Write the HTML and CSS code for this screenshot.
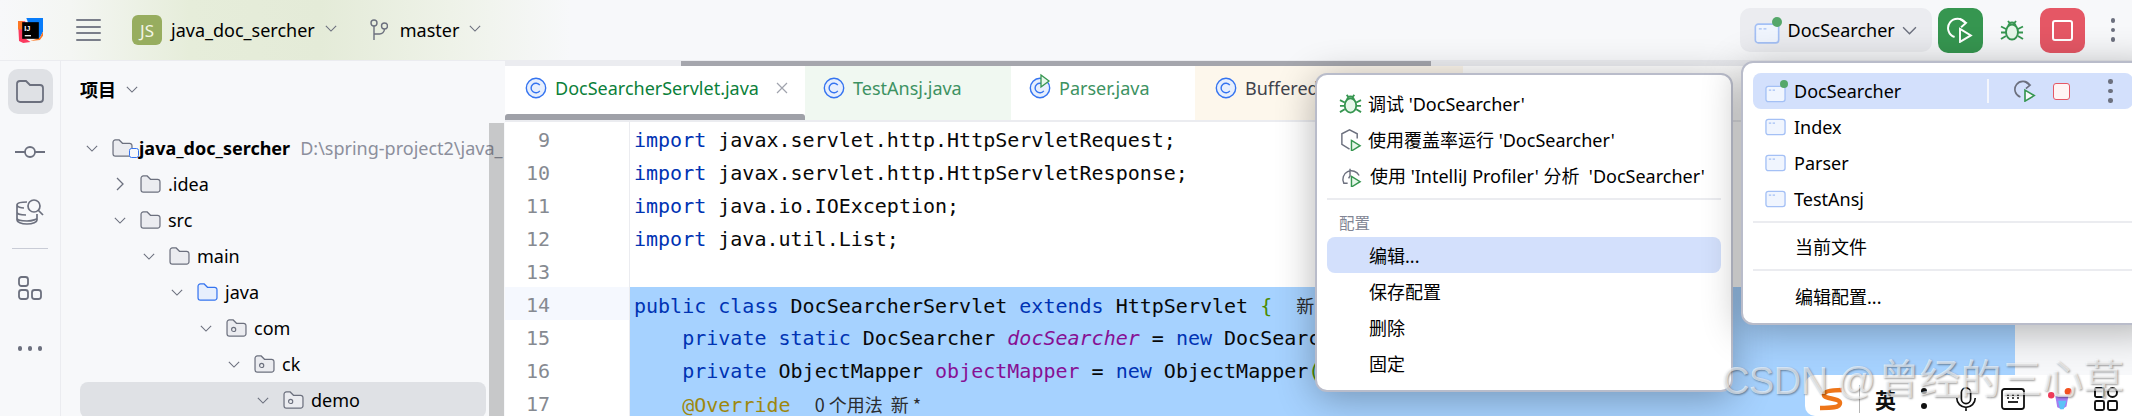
FILE: index.html
```html
<!DOCTYPE html>
<html lang="zh">
<head>
<meta charset="utf-8">
<title>DocSearcher</title>
<link rel="stylesheet" href="styles.css">
</head>
<body>
<svg class="sprite" width="0" height="0">
  <defs>
    <symbol id="chev-d" viewBox="0 0 14 8"><path d="M1 1l6 6 6-6" fill="none" stroke="currentColor" stroke-width="1.300"/></symbol>
    <symbol id="chev-r" viewBox="0 0 8 14"><path d="M1 1l6 6-6 6" fill="none" stroke="currentColor" stroke-width="1.300"/></symbol>
    <symbol id="folder" viewBox="0 0 22 19"><path d="M1 3.500A2.500 2.500 0 0 1 3.500 1H7.500L11 4.500H18.500A2.500 2.500 0 0 1 21 7V15.500A2.500 2.500 0 0 1 18.500 18H3.500A2.500 2.500 0 0 1 1 15.500Z" fill="#ebecf0" stroke="#6c707e" stroke-width="1.300"/></symbol>
    <symbol id="folder-src" viewBox="0 0 22 19"><path d="M1 3.500A2.500 2.500 0 0 1 3.500 1H7.500L11 4.500H18.500A2.500 2.500 0 0 1 21 7V15.500A2.500 2.500 0 0 1 18.500 18H3.500A2.500 2.500 0 0 1 1 15.500Z" fill="#e7effd" stroke="#3574f0" stroke-width="1.300"/></symbol>
    <symbol id="folder-pkg" viewBox="0 0 22 19"><path d="M1 3.500A2.500 2.500 0 0 1 3.500 1H7.500L11 4.500H18.500A2.500 2.500 0 0 1 21 7V15.500A2.500 2.500 0 0 1 18.500 18H3.500A2.500 2.500 0 0 1 1 15.500Z" fill="#ebecf0" stroke="#6c707e" stroke-width="1.300"/><circle cx="8" cy="11" r="2.200" fill="none" stroke="#6c707e" stroke-width="1.200"/></symbol>
    <symbol id="cls" viewBox="0 0 22 22"><circle cx="11" cy="11" r="9.700" fill="#e7effd" stroke="#3574f0" stroke-width="1.400"/><path d="M14.800 8.200A4.800 4.800 0 1 0 14.800 13.800" fill="none" stroke="#3574f0" stroke-width="1.400"/></symbol>
    <symbol id="cls-run" viewBox="0 0 22 26"><circle cx="11" cy="15" r="9.700" fill="#e7effd" stroke="#3574f0" stroke-width="1.400"/><path d="M14.800 12.200A4.800 4.800 0 1 0 14.800 17.800" fill="none" stroke="#3574f0" stroke-width="1.400"/><path d="M12 2l8 6-8 6z" fill="#e6f7e9" stroke="#369650" stroke-width="1.300"/></symbol>
    <symbol id="bug" viewBox="0 0 24 24"><g fill="none" stroke="#369650" stroke-width="1.900"><ellipse cx="12" cy="14" rx="6" ry="7.500" fill="#e6f7e9"/><path d="M8.500 8A3.500 3.500 0 0 1 15.500 8M8 3l2 2.500M16 3l-2 2.500M1 8.500l5 2.500M23 8.500l-5 2.500M1 14.500h5M23 14.500h-5M1 21l5-3M23 21l-5-3"/></g></symbol>
    <symbol id="win" viewBox="0 0 22 18"><rect x="1" y="1" width="20" height="16" rx="2.500" fill="#f0f5fe" stroke="#a4c0f5" stroke-width="1.400"/><path d="M4 5h2.500M8 5h2.500" stroke="#a4c0f5" stroke-width="1.200"/></symbol>
    <symbol id="rerun" viewBox="0 0 24 24"><path d="M17 5.500A8.700 8.700 0 1 0 7 18.500" fill="none" stroke="currentColor" stroke-width="1.800"/><path d="M11.500 1.500l6 4-4.500 4" fill="none" stroke="currentColor" stroke-width="1.800"/><path d="M12 11l10 6-10 6z" fill="var(--play,none)" stroke="var(--plays,currentColor)" stroke-width="1.800"/></symbol>
  </defs>
</svg>

<header class="topbar">
  <svg class="logo" viewBox="0 0 24 24"><path d="M0 3h7l-1 16 6 4-7 1-4-2z" fill="#fb3a5f"/><path d="M0 3h5v8H0z" fill="#fd7723"/><path d="M8 0h16v13l-3 6h-6z" fill="#087cfa"/><path d="M12 22l9-3 3-6v4l-3 4z" fill="#fd7723"/><rect x="4" y="4" width="16" height="16" fill="#000"/><path d="M6.500 17h6" stroke="#fff" stroke-width="1.200"/><text x="6" y="12" class="logo-t">IJ</text></svg>
  <div class="burger"><i></i><i></i><i></i><i></i></div>
  <div class="avatar">JS</div>
  <span class="proj-name">java_doc_sercher</span>
  <svg class="chev-top"><use href="#chev-d"/></svg>
  <svg class="branch" viewBox="0 0 18 22"><g fill="none" stroke="#6c707e" stroke-width="1.400"><circle cx="4" cy="4" r="3"/><circle cx="14.500" cy="7" r="3"/><path d="M4 7v14M4 15h5a5 5 0 0 0 5.500-5"/></g></svg>
  <span class="branch-name">master</span>
  <svg class="chev-top"><use href="#chev-d"/></svg>
  <div class="spacer"></div>
  <div class="run-config">
    <span class="win-dot win-dot-lg"><svg class="win-lg"><use href="#win"/></svg><b></b></span>
    <span class="rc-name">DocSearcher</span>
    <svg class="chev-rc"><use href="#chev-d"/></svg>
  </div>
  <div class="square green"><svg class="ic-btn"><use href="#rerun"/></svg></div>
  <svg class="bug-top"><use href="#bug"/></svg>
  <div class="square red"><i class="stop-w"></i></div>
  <div class="vdots top-dots"><i></i><i></i><i></i></div>
</header>

<main class="main">
  <nav class="strip">
    <div class="strip-active"><svg class="strip-ic" viewBox="0 0 28 24"><path d="M1 4A3 3 0 0 1 4 1H10L14 5H24A3 3 0 0 1 27 8V19A3 3 0 0 1 24 22H4A3 3 0 0 1 1 19Z" fill="none" stroke="#6c707e" stroke-width="1.800"/></svg></div>
    <svg class="strip-ic" viewBox="0 0 30 14"><g fill="none" stroke="#6c707e" stroke-width="1.800"><circle cx="15" cy="7" r="5"/><path d="M0 7h10M20 7h10"/></g></svg>
    <svg class="strip-ic" viewBox="0 0 28 28"><g fill="none" stroke="#6c707e" stroke-width="1.700"><path d="M11 4C5 4 1 5 1 7s4 3 7 3M1 7v15c0 2 4 4 10 4s10-2 10-4v-6M1 14c0 2 4 3 9 3M1 20c0 2 4 3 10 3s10-2 10-3"/><circle cx="18" cy="8" r="6"/><path d="M22 12l5 5"/></g></svg>
    <i class="strip-sep"></i>
    <svg class="strip-ic" viewBox="0 0 24 24"><g fill="none" stroke="#6c707e" stroke-width="1.800"><rect x="1" y="1" width="9" height="9" rx="2.500"/><rect x="1" y="14" width="9" height="9" rx="2.500"/><rect x="14" y="14" width="9" height="9" rx="2.500"/></g></svg>
    <div class="hdots"><i></i><i></i><i></i></div>
  </nav>

  <section class="project">
    <div class="project-head"><b>项目</b><svg class="chev-proj"><use href="#chev-d"/></svg></div>
    <div class="tree">
      <div class="row d0"><svg class="chev"><use href="#chev-d"/></svg><span class="root-ic"><svg class="fold"><use href="#folder"/></svg><i></i></span><b class="root-name">java_doc_sercher</b><span class="path">D:\spring-project2\java_</span></div>
      <div class="row d1"><svg class="chev-side"><use href="#chev-r"/></svg><svg class="fold"><use href="#folder"/></svg><span>.idea</span></div>
      <div class="row d1"><svg class="chev"><use href="#chev-d"/></svg><svg class="fold"><use href="#folder"/></svg><span>src</span></div>
      <div class="row d2"><svg class="chev"><use href="#chev-d"/></svg><svg class="fold"><use href="#folder"/></svg><span>main</span></div>
      <div class="row d3"><svg class="chev"><use href="#chev-d"/></svg><svg class="fold"><use href="#folder-src"/></svg><span>java</span></div>
      <div class="row d4"><svg class="chev"><use href="#chev-d"/></svg><svg class="fold"><use href="#folder-pkg"/></svg><span>com</span></div>
      <div class="row d5"><svg class="chev"><use href="#chev-d"/></svg><svg class="fold"><use href="#folder-pkg"/></svg><span>ck</span></div>
      <div class="row d6 row-sel"><svg class="chev"><use href="#chev-d"/></svg><svg class="fold"><use href="#folder-pkg"/></svg><span>demo</span></div>
      <div class="tree-scroll"></div>
    </div>
  </section>

  <section class="editor">
    <div class="tab-thumb-line"><i></i></div>
    <div class="tabs">
      <div class="tab tab1"><svg class="tab-ic"><use href="#cls"/></svg><span class="t-green">DocSearcherServlet.java</span><svg class="tab-x" viewBox="0 0 12 12"><path d="M1 1l10 10M11 1L1 11" stroke="#a0a3ad" stroke-width="1.200"/></svg><i class="tab-under"></i></div>
      <div class="tab tab2"><svg class="tab-ic"><use href="#cls"/></svg><span class="t-green2">TestAnsj.java</span></div>
      <div class="tab tab3"><svg class="tab-ic-run"><use href="#cls-run"/></svg><span class="t-green2">Parser.java</span></div>
      <div class="tab tab4"><svg class="tab-ic"><use href="#cls"/></svg><span class="t-gray">BufferedReader.java</span></div>
      <div class="tab tab5"><span class="t-red">DocSearcher.java</span></div>
    </div>
    <div class="editor-body">
      <div class="code">
        <div class="ln"><span class="no">9</span><code><s>import</s> javax.servlet.http.HttpServletRequest;</code></div>
        <div class="ln"><span class="no">10</span><code><s>import</s> javax.servlet.http.HttpServletResponse;</code></div>
        <div class="ln"><span class="no">11</span><code><s>import</s> java.io.IOException;</code></div>
        <div class="ln"><span class="no">12</span><code><s>import</s> java.util.List;</code></div>
        <div class="ln"><span class="no">13</span><code></code></div>
        <div class="ln cur"><span class="no">14</span><code class="sel"><s>public class</s> DocSearcherServlet <s>extends</s> HttpServlet <em class="br">{</em>  <span class="hint">新 *</span></code></div>
        <div class="ln"><span class="no">15</span><code class="sel">    <s>private static</s> DocSearcher <em class="fi">docSearcher</em> = <s>new</s> DocSearcher();</code></div>
        <div class="ln"><span class="no">16</span><code class="sel">    <s>private</s> ObjectMapper <em class="fn">objectMapper</em> = <s>new</s> ObjectMapper<em class="br">(</em>);</code></div>
        <div class="ln"><span class="no">17</span><code class="sel">    <em class="an">@Override</em>  <span class="hint">0 个用法  新 *</span></code></div>
      </div>
      <aside class="side-panel">
        <div class="side-row"><svg class="chev-side"><use href="#chev-r"/></svg><span class="side-f"><svg class="fold"><use href="#folder"/></svg><svg class="check" viewBox="0 0 10 8"><path d="M1 4l3 3 5-6" fill="none" stroke="#3574f0" stroke-width="1.600"/></svg></span><span class="side-t">仓库</span></div>
      </aside>
    </div>
  </section>
</main>

<div class="popup popup-run">
  <div class="item"><svg class="pop-ic"><use href="#bug"/></svg><span>调试 'DocSearcher'</span></div>
  <div class="item"><svg class="pop-ic" viewBox="0 0 24 24"><path d="M11 22L3 17V6l8-4 8 4v5" fill="none" stroke="#6c707e" stroke-width="1.500"/><path d="M13 13l9 5.500-9 5.500z" fill="#e6f7e9" stroke="#369650" stroke-width="1.500"/></svg><span>使用覆盖率运行 'DocSearcher'</span></div>
  <div class="item item-w"><svg class="pop-ic" viewBox="0 0 24 24"><path d="M9 20H5A8.500 8.500 0 1 1 21 12M11.500 5v7.500L10 15" fill="none" stroke="#6c707e" stroke-width="1.500"/><path d="M13 13l9 5.500-9 5.500z" fill="#e6f7e9" stroke="#369650" stroke-width="1.500"/></svg><span>使用 'IntelliJ Profiler' 分析&nbsp; 'DocSearcher'</span></div>
  <hr class="pop-sep">
  <div class="pop-label">配置</div>
  <div class="item plain active">编辑...</div>
  <div class="item plain">保存配置</div>
  <div class="item plain">删除</div>
  <div class="item plain">固定</div>
</div>

<div class="popup popup-cfg">
  <div class="item cfg active">
    <span class="win-dot"><svg class="win"><use href="#win"/></svg><b></b></span>
    <span class="cfg-name">DocSearcher</span>
    <i class="cfg-div"></i>
    <svg class="cfg-rerun"><use href="#rerun"/></svg>
    <i class="cfg-stop"></i>
    <div class="vdots cfg-dots"><i></i><i></i><i></i></div>
  </div>
  <div class="item cfg"><svg class="win"><use href="#win"/></svg><span>Index</span></div>
  <div class="item cfg"><svg class="win"><use href="#win"/></svg><span>Parser</span></div>
  <div class="item cfg"><svg class="win"><use href="#win"/></svg><span>TestAnsj</span></div>
  <hr class="cfg-sep">
  <div class="item cfg cfg-plain">当前文件</div>
  <hr class="cfg-sep thick">
  <div class="item cfg cfg-plain">编辑配置...</div>
</div>

<div class="ime">
  <svg class="ime-s" viewBox="0 0 28 24"><path d="M24 3C14 3 6 4 6 8s16 3 16 8-9 5-20 5" fill="none" stroke="#ee7518" stroke-width="4.500"/></svg>
  <i class="ime-div"></i>
  <b class="ime-t">英</b>
  <span class="ime-comma"><i></i><i></i></span>
  <svg class="ime-ic" viewBox="0 0 24 26"><g fill="none" stroke="#111" stroke-width="1.800"><rect x="7" y="1" width="10" height="17" rx="5"/><path d="M2 12a10 10 0 0 0 20 0M12 22v4"/></g></svg>
  <svg class="ime-ic" viewBox="0 0 24 22"><g fill="none" stroke="#111" stroke-width="1.800"><rect x="1" y="1" width="22" height="20" rx="2.500"/><path d="M7 14h10"/><path d="M6 7h2M11 7h2M16 7h2M6 10h2M11 10h2M16 10h2" stroke-width="1.500"/></g></svg>
  <svg class="ime-ic" viewBox="0 0 26 24"><path d="M8 9h14l-2 11-5 3-5-2z" fill="#a57cf0"/><circle cx="3.500" cy="8" r="3.500" fill="#ee3a5a"/><circle cx="22" cy="4" r="4" fill="#f4511e"/><path d="M11 14h9l-3 9h-4z" fill="#5cc2f7"/></svg>
  <svg class="ime-ic" viewBox="0 0 24 24"><g fill="none" stroke="#111" stroke-width="1.900"><rect x="1" y="1" width="9" height="9" rx="1.500"/><circle cx="18.500" cy="5.500" r="4.500"/><rect x="1" y="14" width="9" height="9" rx="1.500"/><rect x="14" y="14" width="9" height="9" rx="1.500"/></g></svg>
</div>

<div class="watermark"><span class="wm-l">CSDN @</span><span class="wm-c">曾经的三心草</span></div>
</body>
</html>
```
FILE: styles.css
```css
* { box-sizing: border-box; }
html, body { margin: 0; padding: 0; }
body {
  width: 2132px; height: 416px; overflow: hidden; position: relative;
  font-family: "Noto Sans", "Noto Sans CJK SC", sans-serif;
  font-size: 18px; color: #000; background: #f7f8fa;
}
.sprite { position: absolute; }
svg { display: block; flex: none; }

/* top bar */
.topbar {
  height: 61px; display: flex; align-items: center; padding-left: 18px;
  border-bottom: 1px solid #ebecf0;
  background: linear-gradient(90deg, #f7f8fa 0, #f4f6f3 70px, #e6edda 190px, #e4ebd8 320px, #eef2e8 450px, #f7f8fa 570px);
}
.logo { width: 25px; height: 25px; }
.logo-t { font: 700 7px "Liberation Sans", sans-serif; fill: #fff; }
.burger { width: 25px; margin-left: 33px; display: flex; flex-direction: column; gap: 4.600px; }
.burger i { height: 2.200px; background: #7a7e8a; border-radius: 1px; }
.avatar {
  width: 30px; height: 30px; margin-left: 31px; border-radius: 6px; background: #97ad5f; color: #f3f6e6;
  font-size: 17px; display: flex; align-items: center; justify-content: center;
}
.proj-name { margin-left: 9px; }
.chev-top { width: 12px; height: 7px; margin-left: 10px; color: #6c707e; margin-top: -3px; }
.branch { width: 18px; height: 22px; margin-left: 33px; }
.branch-name { margin-left: 12px; }
.spacer { flex: 1; }
.run-config {
  width: 192px; height: 44px; border-radius: 10px; background: #ebecf0;
  display: flex; align-items: center; padding-left: 14px;
}
.win-dot { position: relative; display: block; }
.win-dot b { position: absolute; border-radius: 50%; background: #55a76a; }
.win-lg { width: 26px; height: 21px; margin-top: 6px; }
.rc-name { margin-left: 0; }
.chev-rc { width: 15px; height: 9px; margin-left: 7px; color: #6c707e; }
.square { width: 45px; height: 45px; border-radius: 10px; display: flex; align-items: center; justify-content: center; }
.green { background: #369650; margin-left: 6px; color: #fff; --play: none; --plays: #fff; }
.ic-btn { width: 26px; height: 26px; }
.bug-top { width: 24px; height: 24px; margin-left: 17px; }
.red { background: #e55765; margin-left: 16px; }
.stop-w { width: 21px; height: 21px; border: 2px solid #fff; border-radius: 3px; }
.vdots { display: flex; flex-direction: column; gap: 5px; }
.vdots i { width: 4.500px; height: 4.500px; border-radius: 50%; background: #6c707e; }
.top-dots { margin-left: 26px; margin-right: 17px; }

.main { display: flex; height: 355px; }

/* left strip */
.strip { width: 61px; flex: none; border-right: 1px solid #ebecf0; display: flex; flex-direction: column; align-items: center; padding-top: 8px; color: #6c707e; }
.strip-active { width: 45px; height: 45px; background: #dfe1e5; border-radius: 10px; display: flex; align-items: center; justify-content: center; }
.strip-ic { width: 28px; }
.strip-active .strip-ic { height: 24px; }
.strip-active + .strip-ic { height: 14px; width: 30px; margin-top: 31px; }
.strip-active + .strip-ic + .strip-ic { height: 28px; margin-top: 39px; }
.strip-sep { width: 36px; height: 1px; background: #c9ccd6; margin-top: 22px; }
.strip-sep + .strip-ic { width: 24px; height: 24px; margin-top: 27px; }
.hdots { display: flex; gap: 5.500px; margin-top: 46px; }
.hdots i { width: 4.500px; height: 4.500px; border-radius: 50%; background: #6c707e; }

/* project */
.project { width: 444px; flex: none; display: flex; flex-direction: column; }
.project-head { height: 62px; display: flex; align-items: center; padding: 0 0 6px 19px; }
.project-head b { font-weight: 700; }
.chev-proj { width: 12px; height: 7px; margin-left: 10px; color: #6c707e; }
.tree { position: relative; flex: 1; padding: 7px 0 0 19px; overflow: hidden; }
.row { height: 36px; width: 406px; display: flex; align-items: center; white-space: nowrap; color: #000; border-radius: 8px; }
.chev { width: 12px; height: 7px; color: #6c707e; margin-left: 6px; margin-right: 14px; }
.chev-side { width: 8px; height: 14px; color: #6c707e; margin-left: 8px; margin-right: 16px; }
.fold { width: 21px; height: 18px; margin-right: 7px; }
.d0 { padding-left: 0; }
.d1 { padding-left: 28px; }
.d2 { padding-left: 57px; }
.d3 { padding-left: 85px; }
.d4 { padding-left: 114px; }
.d5 { padding-left: 142px; }
.d6 { padding-left: 171px; }
.row-sel { background: #dfe1e5; }
.root-ic { position: relative; }
.root-ic i { position: absolute; right: 1px; bottom: -1px; width: 10px; height: 10px; border: 1.500px solid #3574f0; border-radius: 2.500px; background: #f7f8fa; }
.root-name { font-weight: 700; margin-left: -1px; }
.path { color: #8c8f9c; margin-left: 10px; }
.tree-scroll { position: absolute; right: 1px; top: 0; bottom: 0; width: 15px; background: rgba(60, 60, 60, .26); }

/* editor */
.editor { flex: 1; min-width: 0; background: #fff; display: flex; flex-direction: column; }
.tab-thumb-line { height: 5px; background: #ebecf0; padding-left: 176px; }
.tab-thumb-line i { display: block; width: 750px; height: 5px; background: #a5a6ad; }
.tabs { height: 56px; display: flex; white-space: nowrap; border-bottom: 2px solid #ebecf0; }
.tab { display: flex; align-items: center; padding-bottom: 10px; position: relative; flex: none; }
.tab1 { width: 300px; padding-left: 20px; }
.tab2 { width: 206px; padding-left: 18px; background: #f0f8f1; }
.tab3 { width: 184px; padding-left: 18px; }
.tab4 { width: 268px; padding-left: 20px; background: #fdf7ec; }
.tab5 { padding-left: 12px; }
.tab-ic { width: 22px; height: 22px; margin-right: 8px; }
.tab-ic-run { width: 22px; height: 26px; margin-right: 8px; margin-top: -4px; }
.t-green { color: #0b7f3a; }
.t-green2 { color: #3d9262; }
.t-gray { color: #40434c; }
.t-red { color: #c23c3c; }
.tab-x { width: 12px; height: 12px; margin-left: 17px; }
.tab-under { position: absolute; left: 0; right: 0; bottom: 0; height: 6px; background: #9fa1a8; border-radius: 3px 3px 0 0; }

.editor-body { flex: 1; display: flex; min-height: 0; }
.code { width: 1510px; overflow: hidden; flex: none; }
.ln { height: 33px; display: flex; }
.cur { background: #f5f8fe; }
.no {
  width: 125px; flex: none; padding-right: 79px; text-align: right; color: #868a91; border-right: 1px solid #ebecf0;
  font: 20px/36px "DejaVu Sans Mono", monospace;
}
.ln code {
  flex: 1; padding-left: 4px; white-space: pre; color: #080808; background: #fff;
  font: 20px/36px "DejaVu Sans Mono", "Noto Sans CJK SC", monospace;
}
.ln .sel { background: #a6d2ff; }
code s { text-decoration: none; color: #0033b3; }
code em { font-style: normal; }
.br { color: #4a8a00; }
code .fi { font-style: italic; color: #871094; }
.fn { color: #871094; }
.an { color: #9e880d; }
.hint { font-family: "Noto Sans CJK SC", sans-serif; font-size: 18px; color: #2b2d30; }
.side-panel { flex: 1; background: #f7f8fa; padding-top: 264px; }
.side-row { display: flex; align-items: center; padding-left: 55px; white-space: nowrap; color: #000; }
.side-f { position: relative; margin-left: -2px; }
.check { position: absolute; right: 4px; bottom: -3px; width: 10px; height: 8px; }
.side-t { margin-left: -2px; }

/* popups */
.popup {
  position: absolute; background: #fff; border: 2px solid #b9bcca; border-radius: 12px;
  box-shadow: 0 6px 38px rgba(0, 0, 0, .3);
  white-space: nowrap;
}
.popup-run { left: 1315px; top: 73px; width: 418px; height: 319px; padding: 10px 10px; }
.item { height: 36px; display: flex; align-items: center; padding-left: 12px; border-radius: 8px; }
.pop-ic { width: 23px; height: 23px; margin-right: 6px; }
.item-w .pop-ic { margin-right: 8px; }
.pop-sep { border: 0; height: 1.500px; background: #ebecf0; margin: 5px 0 0; }
.pop-label { height: 31px; font-size: 15.500px; line-height: 34px; color: #818594; padding-left: 12px; margin-top: 6px; }
.plain { padding-left: 42px; }
.active { background: #d3e0fc; }

.popup-cfg { left: 1741px; top: 61px; width: 420px; height: 264px; padding: 10px 0 0 10px; }
.cfg { padding-left: 12px; width: 380px; }
.cfg > .win { width: 21px; height: 18px; margin-right: 8px; }
.win-dot .win { width: 21px; height: 18px; margin-top: 5px; }
.win-dot b { width: 8px; height: 8px; right: -2px; top: 0; }
.win-dot { margin-right: 8px; }
.win-dot-lg b { width: 10px; height: 10px; right: -2px; top: 0; }
.cfg-name { width: 193px; }
.cfg-div { width: 2px; height: 24px; background: #f4f6fc; }
.cfg-rerun { width: 22px; height: 22px; margin-left: 25px; color: #6c707e; --play: #f7f8fa; --plays: #369650; }
.cfg-stop { width: 17px; height: 17px; margin-left: 17px; border: 1.500px solid #e55765; border-radius: 3px; background: #fff4f4; }
.cfg-dots { margin-left: 38px; }
.cfg-plain { padding-left: 42px; }
.cfg-sep { border: 0; height: 1.500px; background: #ebecf0; margin: 4px 0 5px; }
.cfg-sep.thick { height: 2px; margin: 5px 0 7px; }

/* ime */
.ime {
  position: absolute; left: 1805px; top: 375px; width: 327px; height: 41px; background: #fff; border-radius: 10px 0 0 10px;
  display: flex; align-items: center; padding: 6px 0 0 13px;
}
.ime-s { width: 28px; height: 24px; }
.ime-div { width: 1px; height: 28px; background: #b5b5b5; margin-left: 13px; }
.ime-t { font-family: "Noto Sans CJK SC", sans-serif; font-size: 21px; margin-left: 15px; color: #111; }
.ime-comma { display: flex; flex-direction: column; gap: 9px; margin-left: 25px; }
.ime-comma i { width: 6px; height: 6px; border-radius: 50%; background: #111; }
.ime-ic { width: 24px; height: 24px; }
.ime-comma + .ime-ic { margin-left: 27px; }
.ime-comma + .ime-ic + .ime-ic { margin-left: 23px; }
.ime-comma + .ime-ic + .ime-ic + .ime-ic { margin-left: 23px; }
.ime-comma + .ime-ic + .ime-ic + .ime-ic + .ime-ic { margin-left: 22px; }

/* watermark */
.watermark {
  position: absolute; left: 1722px; top: 346px; white-space: nowrap; line-height: 60px;
  color: rgba(255, 255, 255, .62); text-shadow: 1px 1px 2px rgba(0, 0, 0, .38);
}
.wm-l { font: 38px/60px "Liberation Sans", sans-serif; letter-spacing: -.6px; }
.wm-c { font: 41px/60px "Noto Sans CJK SC", sans-serif; margin-left: 3px; }
```
